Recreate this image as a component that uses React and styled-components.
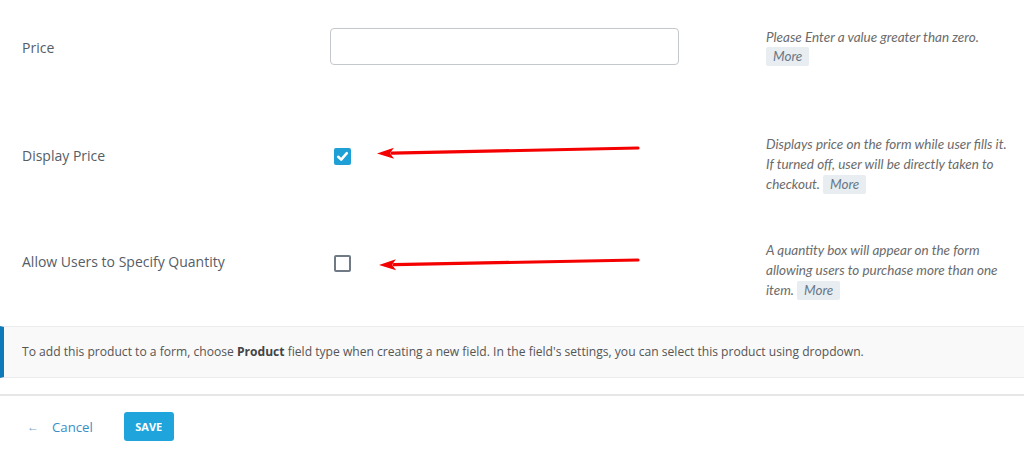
import React from "react";
import styled, { createGlobalStyle } from "styled-components";

const GlobalStyle = createGlobalStyle`
  html, body { margin: 0; padding: 0; background: #ffffff; }
  body { font-family: "Open Sans", "Liberation Sans", sans-serif; }
  * { box-sizing: border-box; }
`;

const Page = styled.div`
  position: relative;
  width: 1024px;
  height: 452px;
  overflow: hidden;
  background: #fff;
`;

const Form = styled.div`
  padding-top: 27px;
  display: flex;
  flex-direction: column;
`;

const Row = styled.div`
  display: grid;
  grid-template-columns: 308px 436px 250px;
  padding-left: 22px;
  min-height: 106px;
  align-items: start;
  &:first-child { min-height: 107px; }
  &:last-child { min-height: 86px; }
`;

const Label = styled.div`
  padding-top: ${(p) => p.$top}px;
  font-size: 14px;
  line-height: 20px;
  color: #555d66;
`;

const Control = styled.div`
  padding-top: ${(p) => p.$top}px;
  display: flex;
`;

const TextInput = styled.input`
  width: 349px;
  height: 37px;
  border: 1px solid #c4c8cc;
  border-radius: 4px;
  background: #fff;
  outline: none;
  font-family: inherit;
  font-size: 14px;
  padding: 0 10px;
`;

const Checkbox = styled.span`
  display: inline-flex;
  align-items: center;
  justify-content: center;
  width: 17px;
  height: 17px;
  margin-left: 4px;
  border-radius: 2px;
  border: ${(p) => (p.$checked ? "none" : "2px solid #6f7a86")};
  background: ${(p) => (p.$checked ? "#1e9fd6" : "#fff")};
`;

const Help = styled.div`
  font-family: Lato, "Open Sans", sans-serif;
  font-style: italic;
  font-size: 13.5px;
  line-height: 20px;
  color: #6b6b6b;
`;

const MoreButton = styled.span`
  display: inline-block;
  vertical-align: top;
  margin-top: ${(p) => (p.$inline ? 1 : 0)}px;
  margin-left: ${(p) => (p.$inline ? 3 : 0)}px;
  padding: 0 7px;
  height: 19px;
  line-height: 19px;
  background: #e8edf1;
  border-radius: 2px;
  color: #687887;
  font-style: italic;
`;

const Notice = styled.div`
  border-top: 1px solid #ececec;
  border-bottom: 1px solid #ececec;
  border-left: 4px solid #0e7ab9;
  background: #f9f9f9;
  padding: 15px 18px;
  font-size: 12.1px;
  line-height: 20px;
  color: #555;
  b { color: #444; font-weight: 700; }
`;

const Divider = styled.hr`
  margin: 16px 0 0;
  border: none;
  height: 2px;
  background: #e6e6e6;
`;

const Footer = styled.div`
  display: flex;
  align-items: center;
  gap: 31px;
  padding: 16px 0 0 27px;
`;

const CancelLink = styled.a`
  display: flex;
  align-items: center;
  gap: 13px;
  font-size: 13.2px;
  color: #3a8ec6;
  text-decoration: none;
  span { color: #7ba8cc; font-size: 12px; }
`;

const SaveButton = styled.button`
  height: 29px;
  width: 50px;
  padding: 0;
  border: none;
  border-radius: 3px;
  background: #1fa5dc;
  color: #fff;
  font-family: "Open Sans", sans-serif;
  font-weight: 700;
  font-size: 11px;
`;

const Overlay = styled.svg`
  position: absolute;
  left: 0;
  top: 0;
  pointer-events: none;
`;

const Check = () => (
  <svg width="13" height="13" viewBox="0 0 13 13">
    <path d="M2.2 6.8 L5.2 9.6 L10.8 3.2" stroke="#fff" strokeWidth="2.6" fill="none" strokeLinecap="round" strokeLinejoin="round" />
  </svg>
);

const Arrow = ({ x1, y1, x2, y2 }) => {
  const dx = x2 - x1, dy = y2 - y1;
  const len = Math.hypot(dx, dy);
  const ux = dx / len, uy = dy / len;
  const hl = 17, hw = 5.5;
  const bx = x2 - ux * hl, by = y2 - uy * hl;
  const px = -uy, py = ux;
  return (
    <g>
      <line x1={x1} y1={y1} x2={bx + ux * 2} y2={by + uy * 2} stroke="#f40000" strokeWidth="3.2" strokeLinecap="round" />
      <polygon points={`${x2},${y2} ${bx + px * hw},${by + py * hw} ${bx + ux * 4},${by + uy * 4} ${bx - px * hw},${by - py * hw}`} fill="#f40000" />
    </g>
  );
};

export default function App() {
  return (
    <Page>
      <GlobalStyle />
      <Form>
        <Row>
          <Label $top={11}>Price</Label>
          <Control $top={1}><TextInput type="text" /></Control>
          <Help>
            Please Enter a value greater than zero.
            <br />
            <MoreButton>More</MoreButton>
          </Help>
        </Row>
        <Row>
          <Label $top={12}>Display Price</Label>
          <Control $top={14}><Checkbox $checked><Check /></Checkbox></Control>
          <Help>
            Displays price on the form while user fills it. If turned off, user will be directly taken to checkout.
            <MoreButton $inline>More</MoreButton>
          </Help>
        </Row>
        <Row>
          <Label $top={12}>Allow Users to Specify Quantity</Label>
          <Control $top={15}><Checkbox /></Control>
          <Help>
            A quantity box will appear on the form allowing users to purchase more than one item.
            <MoreButton $inline>More</MoreButton>
          </Help>
        </Row>
      </Form>
      <Notice>
        To add this product to a form, choose <b>Product</b> field type when creating a new field. In the field's settings, you can select this product using dropdown.
      </Notice>
      <Divider />
      <Footer>
        <CancelLink href="#"><span>←</span>Cancel</CancelLink>
        <SaveButton>SAVE</SaveButton>
      </Footer>
      <Overlay width="1024" height="452">
        <Arrow x1={638} y1={148} x2={377} y2={153.5} />
        <Arrow x1={638} y1={260} x2={379} y2={265} />
      </Overlay>
    </Page>
  );
}
